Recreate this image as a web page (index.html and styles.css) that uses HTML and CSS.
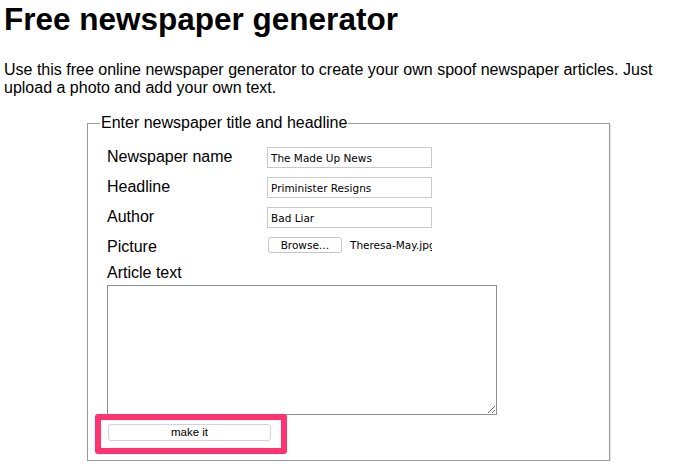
FILE: index.html
```html
<!DOCTYPE html>
<html lang="en">
<head>
<meta charset="utf-8">
<title>Free newspaper generator</title>
<link rel="stylesheet" href="styles.css">
</head>
<body>
<h1 class="title">Free newspaper generator</h1>
<p class="intro">Use this free online newspaper generator to create your own spoof newspaper articles. Just upload a photo and add your own text.</p>
<form class="generator">
  <fieldset class="panel">
    <legend class="panel-legend">Enter newspaper title and headline</legend>
    <div class="panel-body">
      <div class="row">
        <label class="row-label">Newspaper name</label>
        <input class="text-field" type="text" value="The Made Up News">
      </div>
      <div class="row">
        <label class="row-label">Headline</label>
        <input class="text-field" type="text" value="Priminister Resigns">
      </div>
      <div class="row">
        <label class="row-label">Author</label>
        <input class="text-field" type="text" value="Bad Liar">
      </div>
      <div class="row row-file">
        <label class="row-label">Picture</label>
        <div class="file-field">
          <span class="file-button">Browse…</span>
          <span class="file-name">Theresa-May.jpg</span>
        </div>
      </div>
      <label class="block-label">Article text</label>
      <textarea class="article"></textarea>
      <div class="submit-wrap">
        <button class="submit" type="button">make it</button>
        <span class="highlight"></span>
      </div>
    </div>
  </fieldset>
</form>
</body>
</html>
```

FILE: styles.css
```css
html, body {
  background: #ffffff;
}

body {
  margin: 0;
  padding: 0 4px;
  font-family: "Liberation Sans", Arial, sans-serif;
  color: #000000;
}

.title {
  margin: 0;
  padding-top: 1px;
  font-size: 31.5px;
  line-height: 36px;
  font-weight: bold;
}

.intro {
  margin: 24px 0 0;
  font-size: 16px;
  line-height: 18px;
}

.generator {
  margin: 17px 0 0 83px;
  width: 523px;
}

.panel {
  margin: 0;
  width: 523px;
  min-width: 0;
  box-sizing: border-box;
  padding: 0 0 19px 12px;
  border: 1px solid #9b9b9b;
  box-shadow: 1px 1px 0 #e6e6e6;
}

.panel-legend {
  padding: 0 1px;
  font-size: 16px;
  line-height: 18px;
}

.panel-body {
  padding: 15px 0 0 7px;
}

.row {
  display: flex;
  align-items: flex-start;
  height: 21px;
  margin-bottom: 9px;
}

.row-file {
  height: 18px;
}

.row-label {
  width: 160px;
  flex: none;
  padding-top: 1px;
  font-size: 16px;
  line-height: 18px;
}

.text-field {
  width: 165px;
  height: 21px;
  box-sizing: border-box;
  margin: 0;
  padding: 0 3px;
  border: 1px solid #c9c9c9;
  border-radius: 0;
  font-family: "DejaVu Sans", sans-serif;
  font-size: 10.5px;
  color: #000000;
  background: #ffffff;
  outline: none;
}

.file-field {
  display: flex;
  align-items: flex-start;
  width: 165px;
  overflow: hidden;
  white-space: nowrap;
}

.file-button {
  flex: none;
  margin-left: 1px;
  width: 74px;
  height: 16px;
  box-sizing: border-box;
  border: 1px solid #c6c6c6;
  border-radius: 3px;
  background: #ffffff;
  font-family: "DejaVu Sans", sans-serif;
  font-size: 10.5px;
  line-height: 14px;
  text-align: center;
}

.file-name {
  flex: none;
  margin-left: 8px;
  font-family: "DejaVu Sans", sans-serif;
  font-size: 10.5px;
  line-height: 16px;
}

.block-label {
  display: block;
  font-size: 16px;
  line-height: 18px;
}

.article {
  display: block;
  width: 390px;
  height: 130px;
  box-sizing: border-box;
  margin: 3px 0 0;
  padding: 2px;
  border: 1px solid #8f8f8f;
  resize: both;
  font-family: "DejaVu Sans", sans-serif;
  font-size: 11px;
}

.submit-wrap {
  position: relative;
  margin-top: 9px;
  height: 17px;
}

.submit {
  display: block;
  margin: 0 0 0 1px;
  width: 163px;
  height: 17px;
  box-sizing: border-box;
  padding: 0;
  border: 1px solid #d3d3d3;
  border-radius: 3px;
  background: #ffffff;
  font-family: "Liberation Sans", Arial, sans-serif;
  font-size: 11.5px;
  line-height: 15px;
  color: #000000;
}

.highlight {
  position: absolute;
  left: -12px;
  top: -10px;
  width: 192px;
  height: 40px;
  box-sizing: border-box;
  border: 6px solid #ff3370;
  border-radius: 3px;
  pointer-events: none;
}
```
